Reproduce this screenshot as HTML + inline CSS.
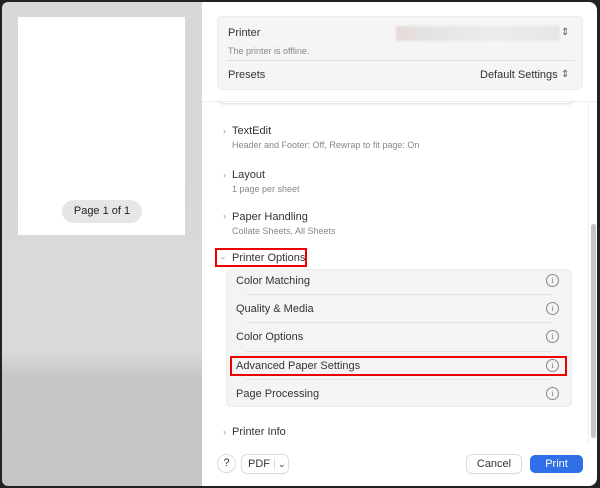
<!DOCTYPE html>
<html><head><style>
*{margin:0;padding:0;box-sizing:border-box}
body{width:600px;height:488px;position:relative;overflow:hidden;background:#222;font-family:"Liberation Sans",sans-serif;color:#333}
.abs{position:absolute}
.left{left:2px;top:2px;width:200px;height:484px;background:linear-gradient(#d8d8d8 0,#d9d9d9 350px,#c6c6c6 375px,#c5c5c5);border-radius:6px 0 0 6px}
.paper{left:18px;top:17px;width:167px;height:218px;background:#fff}
.pill{left:62px;top:200px;width:80px;height:23px;border-radius:12px;background:#e6e6e6;font-size:11px;color:#222;text-align:center;line-height:23px}
.right{left:202px;top:2px;width:395px;height:484px;background:#fff;border-radius:0 8px 8px 0}
.card{left:217px;top:16px;width:366px;height:74px;background:#f5f5f5;border-radius:6px;border:1px solid #ececec}
.t{font-size:11px;color:#333;position:absolute;white-space:nowrap}
.s{font-size:9px;color:#888;position:absolute;white-space:nowrap}
.chev{position:absolute;font-size:9px;color:#999}
.sub{left:226px;top:269px;width:346px;height:138px;background:#f4f4f4;border-radius:5px;border:1px solid #ebebeb}
.line{position:absolute;height:1px;background:#e2e2e2}
.info{position:absolute;width:13px;height:13px;border:1px solid #888;border-radius:50%;font-size:8px;color:#777;text-align:center;line-height:11px;font-family:"Liberation Serif",serif}
.red{position:absolute;border:2px solid #e00}
.btn{position:absolute;height:18px;border-radius:5px;background:#fff;box-shadow:0 0 0 1px #ddd,0 1px 1px #ccc;font-size:11px;text-align:center;line-height:18px;color:#333}
</style></head><body>
<div class="abs left"></div>
<div class="abs paper"></div>
<div class="abs pill">Page 1 of 1</div>
<div class="abs right"></div>
<div class="abs card"></div>
<div class="t" style="left:228px;top:27px">Printer</div>
<div class="abs" style="left:396px;top:26px;width:164px;height:15px;background:linear-gradient(90deg,#e8d8d8,#e4e4e4 20%,#ececec 60%,#e6e6e6);filter:blur(1px)"></div>
<div class="t" style="left:561px;top:27px;font-size:10px;color:#555">⇕</div>
<div class="s" style="left:228px;top:46px">The printer is offline.</div>
<div class="line" style="left:227px;top:60px;width:348px"></div>
<div class="t" style="left:228px;top:69px">Presets</div>
<div class="t" style="left:480px;top:69px">Default Settings</div>
<div class="t" style="left:561px;top:69px;font-size:10px;color:#555">⇕</div>
<div class="line" style="left:202px;top:101px;width:395px;background:#eee"></div>
<div class="abs" style="left:218px;top:98px;width:356px;height:6px;border-bottom:1px solid #e6e6e6;border-radius:0 0 6px 6px;box-shadow:0 1px 2px #eee"></div>
<div class="abs" style="left:588px;top:103px;width:1px;height:340px;background:#eee"></div>
<div class="abs" style="left:591px;top:224px;width:5px;height:214px;border-radius:3px;background:#c4c4c4"></div>
<div class="chev" style="left:223px;top:126px">›</div>
<div class="t" style="left:232px;top:125px">TextEdit</div>
<div class="s" style="left:232px;top:140px">Header and Footer: Off, Rewrap to fit page: On</div>
<div class="chev" style="left:223px;top:170px">›</div>
<div class="t" style="left:232px;top:169px">Layout</div>
<div class="s" style="left:232px;top:184px">1 page per sheet</div>
<div class="chev" style="left:223px;top:211px">›</div>
<div class="t" style="left:232px;top:211px">Paper Handling</div>
<div class="s" style="left:232px;top:226px">Collate Sheets, All Sheets</div>
<div class="chev" style="left:222px;top:253px;transform:rotate(90deg)">›</div>
<div class="t" style="left:232px;top:252px">Printer Options</div>
<div class="red" style="left:215px;top:248px;width:92px;height:19px"></div>
<div class="abs sub"></div>
<div class="t" style="left:236px;top:275px">Color Matching</div>
<div class="line" style="left:246px;top:294px;width:306px"></div>
<div class="t" style="left:236px;top:303px">Quality &amp; Media</div>
<div class="line" style="left:246px;top:322px;width:306px"></div>
<div class="t" style="left:236px;top:331px">Color Options</div>
<div class="line" style="left:246px;top:351px;width:306px"></div>
<div class="t" style="left:236px;top:360px">Advanced Paper Settings</div>
<div class="line" style="left:246px;top:379px;width:306px"></div>
<div class="t" style="left:236px;top:388px">Page Processing</div>
<div class="info" style="left:546px;top:274px">i</div>
<div class="info" style="left:546px;top:302px">i</div>
<div class="info" style="left:546px;top:330px">i</div>
<div class="info" style="left:546px;top:359px">i</div>
<div class="info" style="left:546px;top:387px">i</div>
<div class="red" style="left:230px;top:356px;width:337px;height:20px"></div>
<div class="chev" style="left:223px;top:427px">›</div>
<div class="t" style="left:232px;top:426px">Printer Info</div>
<div class="btn" style="left:218px;top:455px;width:17px;height:17px;border-radius:50%;line-height:17px">?</div>
<div class="btn" style="left:242px;top:455px;width:46px;text-align:left;padding-left:6px">PDF<span style="position:absolute;left:32px;top:3px;width:1px;height:12px;background:#ddd"></span><span style="position:absolute;left:36px;top:0;font-size:9px">⌄</span></div>
<div class="btn" style="left:467px;top:455px;width:54px">Cancel</div>
<div class="btn" style="left:530px;top:455px;width:53px;background:#2f6fe8;color:#fff;box-shadow:none">Print</div>
</body></html>
